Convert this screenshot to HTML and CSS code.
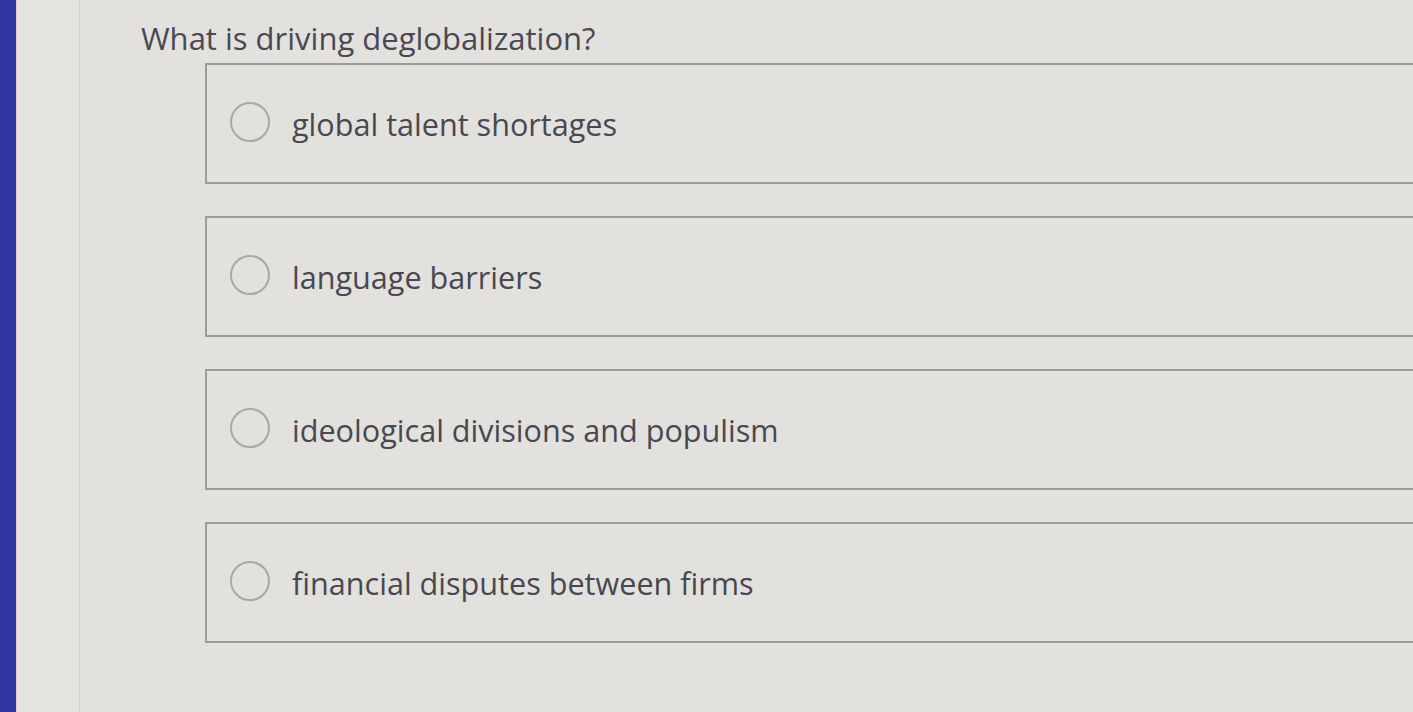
FILE: index.html
```html
<!DOCTYPE html>
<html lang="en">
<head>
<meta charset="utf-8">
<title>What is driving deglobalization?</title>
<link rel="stylesheet" href="styles.css">
</head>
<body>
<div class="screen">
  <div class="edge"></div>
  <div class="sidebar"></div>
  <main class="main">
    <h1 class="question">What is driving deglobalization?</h1>
    <div class="options">
      <label class="option"><span class="radio"></span><span class="label">global talent shortages</span></label>
      <label class="option"><span class="radio"></span><span class="label">language barriers</span></label>
      <label class="option"><span class="radio"></span><span class="label">ideological divisions and populism</span></label>
      <label class="option"><span class="radio"></span><span class="label">financial disputes between firms</span></label>
    </div>
  </main>
</div>
</body>
</html>
```
FILE: styles.css
```css
html, body {
  margin: 0;
  padding: 0;
  height: 100%;
  overflow: hidden;
}
body {
  font-family: "Open Sans", "Noto Sans", sans-serif;
  background: #e3e2de;
}
.screen {
  display: flex;
  height: 712px;
  width: 1413px;
}
.edge {
  width: 16px;
  flex: none;
  background: #2e35a0;
  border-right: 1px solid #e9c9cc;
}
.sidebar {
  width: 62px;
  flex: none;
  background: #e5e4e1;
  border-right: 1px solid #d2d1cd;
}
.main {
  flex: 1;
  padding: 17px 0 0 61px;
  background: #e2e1dd;
}
.question {
  margin: 0;
  font-size: 31px;
  font-weight: 400;
  color: #4a4953;
  line-height: 42px;
}
.options {
  display: flex;
  flex-direction: column;
  gap: 32px;
  margin-top: 4px;
  margin-left: 64px;
}
.option {
  display: flex;
  align-items: flex-start;
  height: 121px;
  border: 2px solid #9d9c9a;
  border-right: none;
  padding: 37px 0 0 23px;
  box-sizing: border-box;
}
.radio {
  width: 40px;
  height: 40px;
  box-sizing: border-box;
  border: 2px solid #a9a8a6;
  border-radius: 50%;
  flex: none;
  margin-right: 22px;
}
.label {
  font-size: 30.6px;
  color: #494852;
  line-height: 40px;
  margin-top: 2px;
}
```
